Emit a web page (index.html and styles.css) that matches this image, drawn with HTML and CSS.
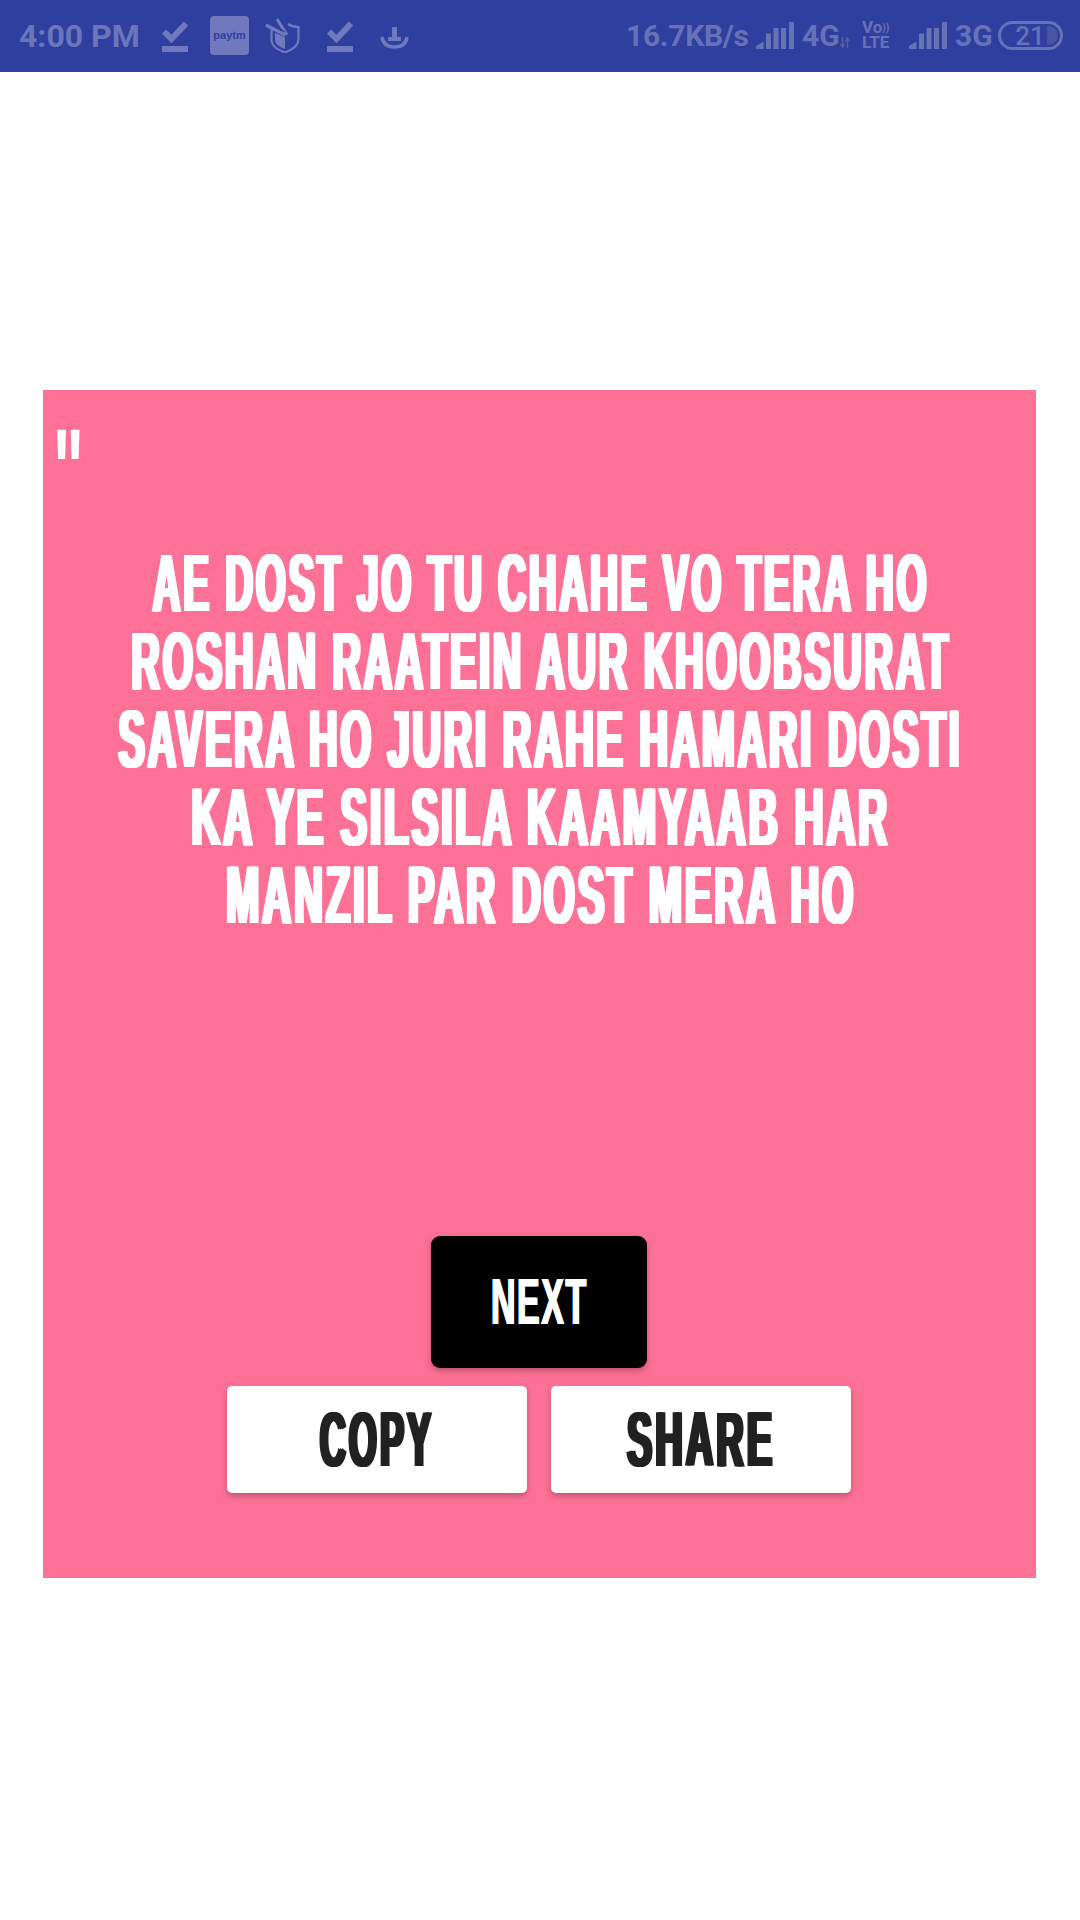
FILE: index.html
```html
<!DOCTYPE html>
<html lang="en">
<head>
<meta charset="utf-8">
<title>Quote</title>
<link rel="stylesheet" href="styles.css">
</head>
<body>
<header class="status">
  <div class="status-left">
    <span class="clock">4:00 PM</span>
    <svg class="ic-check" viewBox="0 0 26 33"><polyline points="2,12.5 9.5,20 24,4.5" fill="none" stroke="#7079bd" stroke-width="6"/><rect y="27" width="26" height="6" fill="#7079bd"/></svg>
    <span class="paytm"><span class="paytm-t">paytm</span></span>
    <svg class="ic-shield" viewBox="0 0 36 36"><path d="M6.500 13V24C7 30 13 33 20 35.500C27 33 33.500 29 33.500 22V10C29 10 26 9 23 7" fill="none" stroke="#7079bd" stroke-width="2.200"/><path d="M10 16L20 20V32C14 30 10 27 10 23Z" fill="#7079bd"/><path d="M1 8L20 18M12 2L22 18" stroke="#7079bd" stroke-width="3.200" fill="none"/><path d="M6 6L20 15" stroke="#2f3f9f" stroke-width="1" fill="none"/></svg>
    <svg class="ic-check ic-check2" viewBox="0 0 26 33"><polyline points="2,12.5 9.5,20 24,4.5" fill="none" stroke="#7079bd" stroke-width="6"/><rect y="27" width="26" height="6" fill="#7079bd"/></svg>
    <svg class="ic-down" viewBox="0 0 29 22"><rect x="12" y="0" width="5" height="13" fill="#7079bd"/><rect x="8" y="10" width="13" height="4" fill="#7079bd"/><path d="M2 10C3 17 8 20 14.500 20C21 20 26 17 27 10" fill="none" stroke="#7079bd" stroke-width="3.600"/></svg>
  </div>
  <div class="status-right">
    <span class="speed">16.7KB/s</span>
    <svg class="ic-sig" viewBox="0 0 38 27"><path d="M0 27V24L7.500 19.500V27ZM10 27V11.500H15V27ZM17.500 27V6H22.500V27ZM25 27V6H30V27ZM33 27V0H38V27Z" fill="#6672b6"/></svg>
    <span class="net">4G</span>
    <svg class="ic-arrows" viewBox="0 0 10 11"><path d="M2.500 0V9M0.500 7L2.500 10L4.500 7M7.500 11V2M5.500 4L7.500 1L9.500 4" fill="none" stroke="#55619f" stroke-width="1.500"/></svg>
    <span class="volte"><span class="vo">Vo<i class="waves">))</i></span><span class="lte">LTE</span></span>
    <svg class="ic-sig ic-sig2" viewBox="0 0 38 27"><path d="M0 27V24L7.500 19.500V27ZM10 27V11.500H15V27ZM17.500 27V6H22.500V27ZM25 27V6H30V27ZM33 27V0H38V27Z" fill="#6672b6"/></svg>
    <span class="net">3G</span>
    <span class="battery"><span class="batt-num">21</span><span class="batt-fill"></span></span>
  </div>
</header>
<main class="card">
  <div class="mark"><span class="cond mark-t">"</span></div>
  <div class="quote">
    <span class="cond line l1">AE DOST JO TU CHAHE VO TERA HO</span>
    <span class="cond line l2">ROSHAN RAATEIN AUR KHOOBSURAT</span>
    <span class="cond line l3">SAVERA HO JURI RAHE HAMARI DOSTI</span>
    <span class="cond line l4">KA YE SILSILA KAAMYAAB HAR</span>
    <span class="cond line l5">MANZIL PAR DOST MERA HO</span>
  </div>
  <div class="actions">
    <button class="btn btn-next"><span class="cond t-next">NEXT</span></button>
    <div class="row">
      <button class="btn btn-light"><span class="cond t-copy">COPY</span></button>
      <button class="btn btn-light"><span class="cond t-share">SHARE</span></button>
    </div>
  </div>
</main>
</body>
</html>
```
FILE: styles.css
```css
* { box-sizing: border-box; }
html, body { margin: 0; padding: 0; }
body { width: 1080px; height: 1920px; background: #fff; overflow: hidden; font-family: "Liberation Sans", Arial, sans-serif; }

.status { height: 72px; background: #2f3f9f; display: flex; justify-content: space-between; align-items: flex-start; padding: 0 17px 0 19px; font-family: Roboto, sans-serif; font-weight: 700; color: #6b76ba; }
.status-left, .status-right { display: flex; align-items: flex-start; }
.clock { font-size: 32px; line-height: 36px; margin-top: 18px; width: 143px; white-space: nowrap; }
.ic-check { width: 26px; height: 33px; margin-top: 19px; }
.paytm { width: 39px; height: 39px; margin: 16px 0 0 22px; background: #7079bd; border-radius: 4px; display: flex; align-items: center; justify-content: center; }
.paytm-t { font: 700 11px/11px "Liberation Sans", sans-serif; color: #2f3f9f; }
.ic-shield { width: 36px; height: 36px; margin: 17px 0 0 16px; }
.ic-check2 { margin-left: 26px; }
.ic-down { width: 29px; height: 22px; margin: 27px 0 0 27px; }

.speed, .net { font-size: 30px; line-height: 36px; margin-top: 18px; white-space: nowrap; color: #6672b6; }
.speed { width: 122px; letter-spacing: -.3px; }
.ic-sig { width: 38px; height: 27px; margin: 22px 0 0 8px; }
.net { margin-left: 8px; width: 35px; }
.ic-arrows { width: 10px; height: 11px; margin: 37px 0 0 3px; }
.volte { display: flex; flex-direction: column; margin: 20px 0 0 12px; width: 31px; color: #6672b6; }
.vo { font-size: 17px; line-height: 15px; white-space: nowrap; }
.waves { font-style: normal; font-size: 10px; vertical-align: 2px; }
.lte { font-size: 17px; line-height: 15px; }
.ic-sig2 { margin-left: 16px; }
.battery { position: relative; width: 65px; height: 29px; margin: 21px 0 0 8px; border: 3px solid #6672b6; border-radius: 15px; display: flex; justify-content: center; font-weight: 500; }
.batt-num { font-size: 26px; line-height: 24px; margin-left: -1px; color: #6672b6; }
.batt-fill { position: absolute; right: 2px; top: 2px; bottom: 2px; width: 11px; background: #47549f; border-radius: 0 10px 10px 0; }

.card { margin: 318px 44px 0 43px; height: 1188px; background: #fe7196; display: flex; flex-direction: column; }
.cond { font-family: "Liberation Sans", Arial, sans-serif; font-weight: 700; white-space: nowrap; transform-origin: center; display: block; }

.mark { height: 60px; padding: 22px 0 0 10px; }
.mark-t { font-size: 116px; line-height: 116px; height: 38px; color: #fff; transform: scaleX(.56); transform-origin: left top; }

.quote { margin-top: 94px; display: flex; flex-direction: column; align-items: center; }
.line { font-size: 81px; line-height: 78px; letter-spacing: 6px; padding-left: 6px; color: #fff; text-shadow: -4px 0 #fff, -2px 0 #fff, 2px 0 #fff, 4px 0 #fff; }
.l1 { transform: scaleX(.475); }
.l2 { transform: scaleX(.484); }
.l3 { transform: scaleX(.485); }
.l4 { transform: scaleX(.494); }
.l5 { transform: scaleX(.4925); }

.actions { margin-top: 302px; padding-right: 1px; display: flex; flex-direction: column; align-items: center; gap: 18px; }
.row { display: flex; gap: 24px; }
.btn { border: 0; padding: 0; display: flex; align-items: center; justify-content: center; box-shadow: 0 3px 6px rgba(0,0,0,.26); }
.btn-next { width: 216px; height: 132px; background: #000; border-radius: 9px; color: #fff; }
.btn-light { width: 300px; height: 107px; background: #fff; border-radius: 5px; color: #212121; }
.t-next { font-size: 64px; letter-spacing: 3px; text-shadow: -1.500px 0 #fff, 1.500px 0 #fff; transform: scaleX(.53); }
.t-copy { font-size: 77px; letter-spacing: 7px; text-shadow: -4px 0 #212121, 4px 0 #212121; transform: scaleX(.465); }
.t-share { font-size: 77px; letter-spacing: 7px; text-shadow: -4px 0 #212121, 4px 0 #212121; transform: scaleX(.487); }
```
